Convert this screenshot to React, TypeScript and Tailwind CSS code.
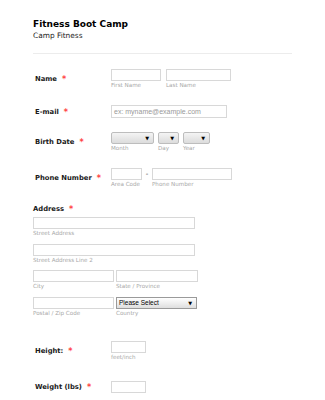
import React from 'react';

const Star = () => <span className="ml-[5px] text-[#f44] text-[8px] leading-[8px] relative top-[1px]">*</span>;

const Label: React.FC<{ text: string; width?: string }> = ({ text, width = 'w-[78px]' }) => (
  <div className={`${width} shrink-0 pl-[2px] text-[6.8px] leading-[12px] font-bold text-[#1a1a1a] flex items-center`}>
    <span>{text}</span>
    <Star />
  </div>
);

const Sub: React.FC<{ text: string }> = ({ text }) => (
  <div className="mt-[1px] text-[5.6px] leading-[7px] text-[#a8a8a8] whitespace-nowrap">{text}</div>
);

const Box: React.FC<{ w: string; h?: string; children?: React.ReactNode }> = ({ w, h = 'h-[12px]', children }) => (
  <div className={`${w} ${h} border border-[#d8d8d8] bg-white flex items-center`}>{children}</div>
);

const Select: React.FC<{ w: string }> = ({ w }) => (
  <div
    className={`${w} h-[12px] border border-[#bdbdbd] rounded-[2px] bg-gradient-to-b from-[#f4f4f4] to-[#dcdcdc] flex items-center justify-end pr-[4px]`}
  >
    <span className="text-[5px] leading-[5px] text-black">▼</span>
  </div>
);

const Field: React.FC<{ w: string; sub: string; children?: React.ReactNode }> = ({ w, sub, children }) => (
  <div className="flex flex-col">
    {children ?? <Box w={w} />}
    <Sub text={sub} />
  </div>
);

export default function App() {
  return (
    <div className="w-[325px] h-[400px] overflow-hidden bg-white font-['DejaVu_Sans',sans-serif]">
      <div className="pl-[33px] pr-[33px] pt-[18px]">
        <div className="text-[9px] leading-[12px] font-bold text-black">Fitness Boot Camp</div>
        <div className="mt-[1px] text-[7.4px] leading-[10px] text-[#222]">Camp Fitness</div>
        <div className="mt-[12px] h-px bg-[#ececec]" />

        {/* Name */}
        <div className="mt-[15px] flex">
          <Label text="Name" />
          <div className="flex gap-[5px]">
            <Field w="w-[50px]" sub="First Name" />
            <Field w="w-[65px]" sub="Last Name" />
          </div>
        </div>

        {/* Email */}
        <div className="mt-[16px] flex">
          <Label text="E-mail" />
          <Box w="w-[116px]" h="h-[13px]">
            <span className="pl-[2px] font-['Liberation_Sans',sans-serif] text-[7px] leading-[9px] text-[#999]">
              ex: myname@example.com
            </span>
          </Box>
        </div>

        {/* Birth date */}
        <div className="mt-[14px] flex">
          <Label text="Birth Date" />
          <div className="flex gap-[4px]">
            <Field w="w-[43px]" sub="Month">
              <Select w="w-[43px]" />
            </Field>
            <Field w="w-[21px]" sub="Day">
              <Select w="w-[21px]" />
            </Field>
            <Field w="w-[27px]" sub="Year">
              <Select w="w-[27px]" />
            </Field>
          </div>
        </div>

        {/* Phone */}
        <div className="mt-[16px] flex">
          <Label text="Phone Number" />
          <div className="flex">
            <Field w="w-[31px]" sub="Area Code" />
            <div className="w-[10px] text-center text-[7px] leading-[12px] text-[#333]">-</div>
            <Field w="w-[80px]" sub="Phone Number" />
          </div>
        </div>

        {/* Address */}
        <div className="mt-[15px] text-[6.8px] leading-[12px] font-bold text-[#1a1a1a] flex items-center">
          <span>Address</span>
          <Star />
        </div>
        <div className="mt-[2px]">
          <Field w="w-[162px]" sub="Street Address" />
        </div>
        <div className="mt-[7px]">
          <Field w="w-[162px]" sub="Street Address Line 2" />
        </div>
        <div className="mt-[6px] flex gap-[2px]">
          <Field w="w-[81px]" sub="City" />
          <Field w="w-[82px]" sub="State / Province" />
        </div>
        <div className="mt-[7px] flex gap-[2px]">
          <Field w="w-[81px]" sub="Postal / Zip Code" />
          <Field w="w-[81px]" sub="Country">
            <div className="w-[81px] h-[12px] border border-[#9a9a9a] bg-gradient-to-b from-[#ffffff] to-[#dedede] flex items-center justify-between pl-[2px] pr-[4px]">
              <span className="font-['Liberation_Sans',sans-serif] text-[6.5px] leading-[8px] text-black">Please Select</span>
              <span className="text-[5px] leading-[5px] text-black">▼</span>
            </div>
          </Field>
        </div>

        {/* Height */}
        <div className="mt-[24px] flex">
          <Label text="Height:" />
          <Field w="w-[35px]" sub="feet/inch" />
        </div>

        {/* Weight */}
        <div className="mt-[20px] flex">
          <Label text="Weight (lbs)" />
          <Box w="w-[35px]" />
        </div>
      </div>
    </div>
  );
}
